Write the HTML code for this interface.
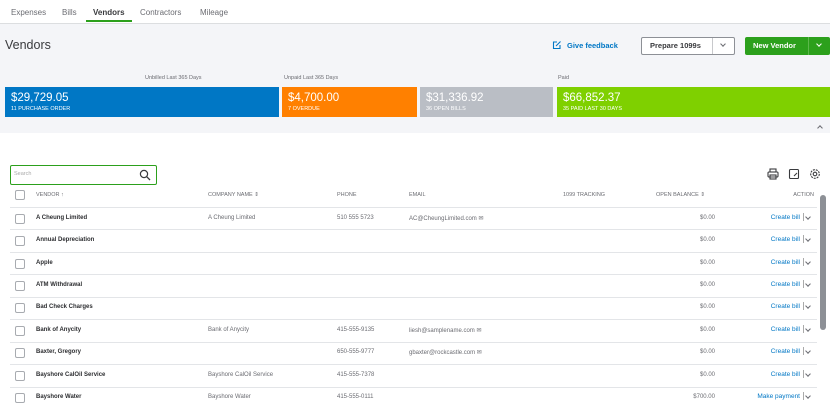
<!DOCTYPE html>
<html><head><meta charset="utf-8"><style>
*{margin:0;padding:0;box-sizing:border-box}
body{width:830px;height:404px;overflow:hidden;background:#fff;font-family:"Liberation Sans",sans-serif;position:relative;color:#393a3d}
.a{position:absolute;white-space:nowrap}
.tab{font-size:8px;color:#6b6c72;top:8px}
.card{position:absolute;top:87px;height:30px;color:#fff;padding:5px 6px}
.card b{display:block;font-weight:normal;font-size:11.5px;line-height:13px}
.card i{display:block;font-style:normal;font-size:5.5px;line-height:8px}
.lbl{font-size:5.5px;color:#6b6c72;top:75px}
.hd{font-size:5.5px;color:#6b6c72;top:192px}
.cb{position:absolute;left:15px;width:10px;height:10px;border:1px solid #a8abb0;border-radius:2px}
.ln{position:absolute;left:10px;width:807px;height:1px;background:#e3e5e8}
.v{font-size:6px;color:#2d2e31;left:36px;font-weight:bold}
.g{font-size:6px;color:#6b6c72}
.bal{font-size:6px;color:#6b6c72;right:115px}
.act{font-size:6.5px;color:#0077c5;right:30px}
.bar{position:absolute;left:803px;width:1px;height:8px;background:#aaa}
.chv{position:absolute;left:806px;width:4px;height:4px;border-right:1px solid #6b6c72;border-bottom:1px solid #6b6c72;transform:rotate(45deg)}
</style></head><body>
<div class="a" style="left:0;top:23px;width:830px;height:110px;background:#f4f5f8;border-top:1px solid #dcdee0"></div>
<div class="a tab" style="left:11px">Expenses</div>
<div class="a tab" style="left:62px">Bills</div>
<div class="a tab" style="left:93px;color:#393a3d;font-weight:bold">Vendors</div>
<div class="a" style="left:86px;top:20px;width:46px;height:2px;background:#2ca01c"></div>
<div class="a tab" style="left:140px">Contractors</div>
<div class="a tab" style="left:200px">Mileage</div>
<div class="a" style="left:5px;top:38px;font-size:12.5px;color:#393a3d">Vendors</div>
<svg class="a" style="left:552px;top:40px" width="10" height="10" viewBox="0 0 10 10" fill="none" stroke="#0077c5" stroke-width="1.1"><path d="M8 5v3.5H1.5V2H5"/><path d="M4 6l4.5-4.5"/></svg>
<div class="a" style="left:567px;top:41px;font-size:7.5px;color:#0077c5;font-weight:bold">Give feedback</div>
<div class="a" style="left:641px;top:37px;width:94px;height:18px;border:1px solid #8d9096;border-radius:2px;background:#fff"></div>
<div class="a" style="left:650px;top:41px;font-size:7.5px;font-weight:bold">Prepare 1099s</div>
<div class="a" style="left:712px;top:38px;width:1px;height:16px;background:#c8c9cc"></div>
<div class="a chv" style="left:721px;top:42px"></div>
<div class="a" style="left:745px;top:37px;width:85px;height:18px;background:#2ca01c;border-radius:2px"></div>
<div class="a" style="left:753px;top:41px;font-size:7.5px;font-weight:bold;color:#fff">New Vendor</div>
<div class="a" style="left:808px;top:37px;width:1px;height:18px;background:#5cb84c"></div>
<div class="a chv" style="left:817px;top:42px;border-color:#fff"></div>
<div class="a lbl" style="left:145px">Unbilled Last 365 Days</div>
<div class="a lbl" style="left:284px">Unpaid Last 365 Days</div>
<div class="a lbl" style="left:558px">Paid</div>
<div class="card" style="left:5px;width:274px;background:#0077c5"><b>$29,729.05</b><i>11 PURCHASE ORDER</i></div>
<div class="card" style="left:282px;width:135px;background:#ff8000"><b>$4,700.00</b><i>7 OVERDUE</i></div>
<div class="card" style="left:420px;width:133px;background:#babec5"><b>$31,336.92</b><i>36 OPEN BILLS</i></div>
<div class="card" style="left:557px;width:273px;background:#7fd000"><b>$66,852.37</b><i>35 PAID LAST 30 DAYS</i></div>
<div class="a chv" style="left:818px;top:126px;transform:rotate(225deg)"></div>
<div class="a" style="left:10px;top:165px;width:147px;height:20px;border:1px solid #2ca01c;border-radius:2px;background:#fff"></div>
<div class="a" style="left:14px;top:171px;font-size:5.5px;color:#aaa">Search</div>
<svg class="a" style="left:139px;top:169px" width="12" height="12" viewBox="0 0 12 12"><circle cx="5" cy="5" r="3.6" fill="none" stroke="#393a3d" stroke-width="1.2"/><path d="M7.6 7.6L11 11" stroke="#393a3d" stroke-width="1.3"/></svg>
<svg class="a" style="left:767px;top:168px" width="12" height="12" viewBox="0 0 12 12" fill="none" stroke="#393a3d" stroke-width="1.1"><rect x="3" y="1" width="6" height="3"/><rect x="1" y="4" width="10" height="5" rx="1"/><rect x="3" y="7" width="6" height="4"/></svg>
<svg class="a" style="left:788px;top:168px" width="12" height="12" viewBox="0 0 12 12" fill="none" stroke="#393a3d" stroke-width="1.1"><rect x="1.5" y="1.5" width="9" height="9" rx="1"/><path d="M6 8l3-3"/></svg>
<svg class="a" style="left:809px;top:168px" width="12" height="12" viewBox="0 0 12 12" fill="none" stroke="#393a3d" stroke-width="1.1"><circle cx="6" cy="6" r="4.3" stroke-dasharray="2 1"/><circle cx="6" cy="6" r="1.8"/></svg>
<div class="cb" style="top:190px"></div>
<div class="a hd" style="left:36px">VENDOR &#8593;</div>
<div class="a hd" style="left:208px">COMPANY NAME &#8661;</div>
<div class="a hd" style="left:337px">PHONE</div>
<div class="a hd" style="left:409px">EMAIL</div>
<div class="a hd" style="left:563px">1099 TRACKING</div>
<div class="a hd" style="left:656px">OPEN BALANCE &#8661;</div>
<div class="a hd" style="right:16px">ACTION</div>
<div class="a" style="left:820px;top:195px;width:6px;height:135px;background:#8d9096;border-radius:3px"></div>
<div class="ln" style="top:207px"></div>

<div class="ln" style="top:229px"></div><div class="ln" style="top:252px"></div><div class="ln" style="top:274px"></div><div class="ln" style="top:297px"></div><div class="ln" style="top:319px"></div><div class="ln" style="top:342px"></div><div class="ln" style="top:364px"></div><div class="ln" style="top:387px"></div>

<div class="cb" style="top:214px"></div><div class="a v" style="top:215px">A Cheung Limited</div><div class="a g" style="left:208px;top:215px">A Cheung Limited</div><div class="a g" style="left:337px;top:215px">510 555 5723</div><div class="a g" style="left:409px;top:215px">AC@CheungLimited.com &#9993;</div><div class="a bal" style="top:215px">$0.00</div><div class="a act" style="top:214px">Create bill</div><div class="bar" style="top:213px"></div><div class="chv" style="top:215px"></div>
<div class="cb" style="top:236px"></div><div class="a v" style="top:237px">Annual Depreciation</div><div class="a bal" style="top:237px">$0.00</div><div class="a act" style="top:236px">Create bill</div><div class="bar" style="top:235px"></div><div class="chv" style="top:237px"></div>
<div class="cb" style="top:259px"></div><div class="a v" style="top:260px">Apple</div><div class="a bal" style="top:260px">$0.00</div><div class="a act" style="top:259px">Create bill</div><div class="bar" style="top:258px"></div><div class="chv" style="top:260px"></div>
<div class="cb" style="top:281px"></div><div class="a v" style="top:282px">ATM Withdrawal</div><div class="a bal" style="top:282px">$0.00</div><div class="a act" style="top:281px">Create bill</div><div class="bar" style="top:280px"></div><div class="chv" style="top:282px"></div>
<div class="cb" style="top:303px"></div><div class="a v" style="top:304px">Bad Check Charges</div><div class="a bal" style="top:304px">$0.00</div><div class="a act" style="top:303px">Create bill</div><div class="bar" style="top:302px"></div><div class="chv" style="top:304px"></div>
<div class="cb" style="top:326px"></div><div class="a v" style="top:327px">Bank of Anycity</div><div class="a g" style="left:208px;top:327px">Bank of Anycity</div><div class="a g" style="left:337px;top:327px">415-555-9135</div><div class="a g" style="left:409px;top:327px">liesh@samplename.com &#9993;</div><div class="a bal" style="top:327px">$0.00</div><div class="a act" style="top:326px">Create bill</div><div class="bar" style="top:325px"></div><div class="chv" style="top:327px"></div>
<div class="cb" style="top:348px"></div><div class="a v" style="top:349px">Baxter, Gregory</div><div class="a g" style="left:337px;top:349px">650-555-9777</div><div class="a g" style="left:409px;top:349px">gbaxter@rockcastle.com &#9993;</div><div class="a bal" style="top:349px">$0.00</div><div class="a act" style="top:348px">Create bill</div><div class="bar" style="top:347px"></div><div class="chv" style="top:349px"></div>
<div class="cb" style="top:371px"></div><div class="a v" style="top:372px">Bayshore CalOil Service</div><div class="a g" style="left:208px;top:372px">Bayshore CalOil Service</div><div class="a g" style="left:337px;top:372px">415-555-7378</div><div class="a bal" style="top:372px">$0.00</div><div class="a act" style="top:371px">Create bill</div><div class="bar" style="top:370px"></div><div class="chv" style="top:372px"></div>
<div class="cb" style="top:393px"></div><div class="a v" style="top:394px">Bayshore Water</div><div class="a g" style="left:208px;top:394px">Bayshore Water</div><div class="a g" style="left:337px;top:394px">415-555-0111</div><div class="a bal" style="top:394px">$700.00</div><div class="a act" style="top:393px">Make payment</div><div class="bar" style="top:392px"></div><div class="chv" style="top:394px"></div>
</body></html>
